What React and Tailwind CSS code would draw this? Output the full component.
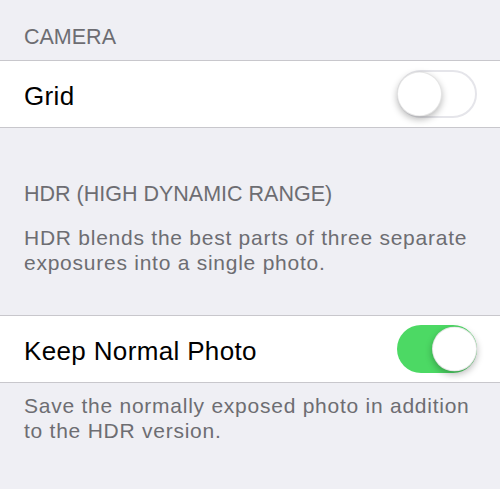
import { useState } from "react";

const Toggle = ({ on, onChange }) => (
    <button
        onClick={onChange}
        className={`relative w-[80px] h-[48px] rounded-full transition-colors ${
            on ? "bg-[#4cd964]" : "bg-white border-[2px] border-[#e5e5ea]"
        }`}
    >
        <span
            className={`absolute top-1/2 -translate-y-1/2 w-[45px] h-[45px] rounded-full bg-white border border-black/10 shadow-[0_3px_7px_rgba(0,0,0,0.28)] ${
                on ? "right-[0px]" : "left-[-2px]"
            }`}
        />
    </button>
);

const Row = ({ label, on, onChange }) => (
    <div className="flex items-center justify-between h-[68px] bg-white border-y border-[#c8c7cc] pl-[24px] pr-[23px]">
        <span className="text-[26px] leading-[30px] pt-[3px] tracking-[0.35px] text-black">{label}</span>
        <Toggle on={on} onChange={onChange} />
    </div>
);

export default function App() {
    const [grid, setGrid] = useState(false);
    const [keepNormal, setKeepNormal] = useState(true);

    return (
        <div className="min-h-[489px] bg-[#efeff4] font-['Liberation_Sans',Arial,sans-serif]">
            {/* Camera section */}
            <div className="pt-[24px] pb-[10px] px-[24px] text-[21.5px] leading-[26px] text-[#6d6d72]">
                CAMERA
            </div>
            <Row label="Grid" on={grid} onChange={() => setGrid(!grid)} />

            {/* HDR section */}
            <div className="pt-[53px] px-[24px] text-[21.5px] leading-[26px] text-[#6d6d72]">
                HDR (HIGH DYNAMIC RANGE)
            </div>
            <p className="pt-[18px] pb-[40px] pl-[24px] pr-[16px] text-[21px] leading-[25px] tracking-[0.75px] text-[#6d6d72]">
                HDR blends the best parts of three separate exposures into a single photo.
            </p>
            <Row
                label="Keep Normal Photo"
                on={keepNormal}
                onChange={() => setKeepNormal(!keepNormal)}
            />
            <p className="pt-[10px] pl-[24px] pr-[16px] text-[21px] leading-[25px] tracking-[0.75px] text-[#6d6d72]">
                Save the normally exposed photo in addition to the HDR version.
            </p>
        </div>
    );
}
